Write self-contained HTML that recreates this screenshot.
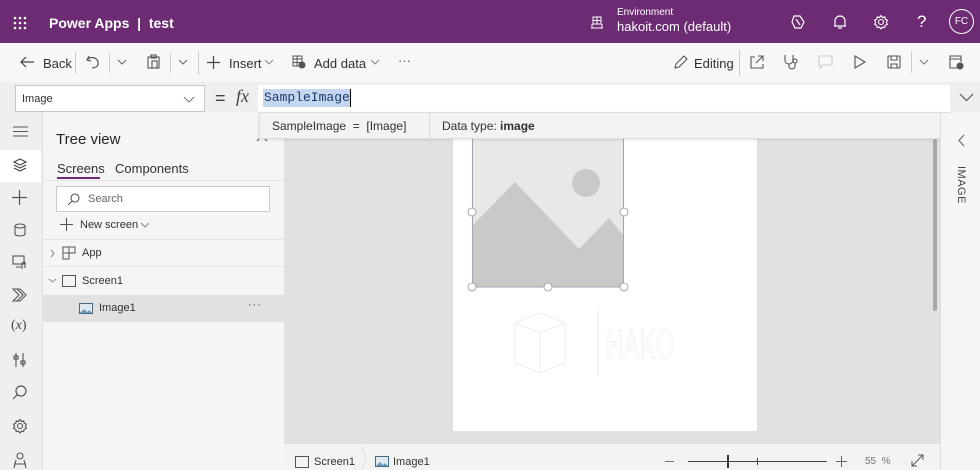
<!DOCTYPE html>
<html><head><meta charset="utf-8"><style>
*{box-sizing:border-box;margin:0;padding:0}
body{width:980px;height:470px;overflow:hidden;font-family:"Liberation Sans",sans-serif;background:#e2e2e2;position:relative;color:#323130}
.a{position:absolute}
svg{position:absolute;overflow:visible}
.t{font-size:12px;color:#323130;white-space:nowrap}
</style></head><body>
<div class="a" style="left:0;top:0;width:980px;height:43px;background:#6c2b72"></div>
<svg style="left:13px;top:16px" width="14" height="14"><g fill="#fff"><circle cx="2" cy="2" r="1.3"/><circle cx="7" cy="2" r="1.3"/><circle cx="12" cy="2" r="1.3"/><circle cx="2" cy="7" r="1.3"/><circle cx="7" cy="7" r="1.3"/><circle cx="12" cy="7" r="1.3"/><circle cx="2" cy="12" r="1.3"/><circle cx="7" cy="12" r="1.3"/><circle cx="12" cy="12" r="1.3"/></g></svg>
<div class="a" style="left:49px;top:15px;color:#fff;font-size:14px;font-weight:bold">Power Apps&nbsp; | &nbsp;test</div>
<svg style="left:590px;top:16px" width="14" height="13" fill="none" stroke="#fff" stroke-width="1"><rect x="3" y="1" width="8" height="7"/><path d="M7 1v7M3 4.5h8M1 12h12M2 8v4M12 8v4"/></svg>
<div class="a" style="left:617px;top:7px;color:#fff;font-size:10px">Environment</div>
<div class="a" style="left:617px;top:19px;color:#fff;font-size:13px">hakoit.com (default)</div>
<svg style="left:790px;top:14px" width="16" height="16" fill="none" stroke="#fff" stroke-width="1.2"><path d="M4 2h6l4 6-3 6H5L2 8z"/><path d="M6 5l4 6"/></svg>
<svg style="left:833px;top:14px" width="14" height="16" fill="none" stroke="#fff" stroke-width="1.2"><path d="M2 12V7a5 5 0 0110 0v5zM1 12h12M5 14h4"/></svg>
<svg style="left:873px;top:14px" width="16" height="16" fill="none" stroke="#fff" stroke-width="1.1"><circle cx="8" cy="8" r="2.5"/><path d="M8 1.5l1.5 2 2.3-.6.4 2.3 2.2 1-1 2.2 1 2-2.3 1-.4 2.2-2.3-.5L8 15l-1.5-1.9-2.3.5-.4-2.2-2.2-1 1-2-1-2.2 2.2-1 .4-2.3 2.3.6z"/></svg>
<div class="a" style="left:917px;top:12px;color:#fff;font-size:17px">?</div>
<div class="a" style="left:949px;top:9px;width:25px;height:25px;border:1px solid #fff;border-radius:50%;color:#fff;font-size:10px;text-align:center;line-height:23px">FC</div>

<div class="a" style="left:0;top:43px;width:980px;height:39px;background:#f7f7f7"></div>
<svg style="left:20px;top:56px" width="14" height="12" fill="none" stroke="#444" stroke-width="1.2"><path d="M14 6H1M6 1L1 6l5 5"/></svg>
<div class="a t" style="left:43px;top:56px;font-size:13px">Back</div>
<div class="a" style="left:75px;top:52px;width:1px;height:22px;background:#ccc"></div>
<svg style="left:86px;top:55px" width="14" height="13" fill="none" stroke="#555" stroke-width="1.2"><path d="M3 1L1 5l4 1M1 5c3-4 10-3 11 2s-4 6-6 6"/></svg>
<div class="a" style="left:109px;top:53px;width:1px;height:20px;background:#ccc"></div>
<svg style="left:117px;top:59px" width="10" height="6" fill="none" stroke="#666"><path d="M1 1l4 4 4-4"/></svg>
<svg style="left:147px;top:54px" width="13" height="15" fill="none" stroke="#555" stroke-width="1.1"><rect x="1" y="3" width="11" height="11"/><rect x="4" y="1" width="5" height="3"/><rect x="5" y="7" width="5" height="7"/></svg>
<div class="a" style="left:170px;top:53px;width:1px;height:20px;background:#ccc"></div>
<svg style="left:178px;top:59px" width="10" height="6" fill="none" stroke="#666"><path d="M1 1l4 4 4-4"/></svg>
<div class="a" style="left:198px;top:51px;width:1px;height:24px;background:#ccc"></div>
<svg style="left:207px;top:56px" width="13" height="13" fill="none" stroke="#444" stroke-width="1.2"><path d="M6.5 0v13M0 6.5h13"/></svg>
<div class="a t" style="left:229px;top:56px;font-size:13px">Insert</div>
<svg style="left:264px;top:59px" width="10" height="6" fill="none" stroke="#888"><path d="M1 1l4 4 4-4"/></svg>
<svg style="left:292px;top:55px" width="14" height="14" fill="none" stroke="#555" stroke-width="1"><rect x="1" y="1" width="9" height="10"/><path d="M1 4h9M1 7.5h9M5 1v10"/><circle cx="10" cy="10" r="3" fill="#555"/></svg>
<div class="a t" style="left:314px;top:56px;font-size:13px">Add data</div>
<svg style="left:370px;top:59px" width="10" height="6" fill="none" stroke="#888"><path d="M1 1l4 4 4-4"/></svg>
<div class="a t" style="left:398px;top:53px;font-size:13px;color:#555">···</div>
<svg style="left:674px;top:55px" width="14" height="14" fill="none" stroke="#555" stroke-width="1.1"><path d="M1 13l1-4 8-8 3 3-8 8z"/></svg>
<div class="a t" style="left:694px;top:56px;font-size:13px">Editing</div>
<div class="a" style="left:739px;top:50px;width:1px;height:26px;background:#ccc"></div>
<svg style="left:750px;top:55px" width="15" height="14" fill="none" stroke="#555" stroke-width="1.1"><path d="M5 2H1v11h12V9M8 1h5v5M13 1L6 8"/></svg>
<svg style="left:784px;top:54px" width="15" height="15" fill="none" stroke="#555" stroke-width="1.1"><path d="M1 1v5a4 4 0 008 0V1M5 10v2a3 3 0 006 0V9"/><circle cx="11" cy="7" r="2"/></svg>
<svg style="left:818px;top:55px" width="15" height="13" fill="none" stroke="#ccc" stroke-width="1.1"><path d="M1 1h13v9H5l-3 3v-3H1z"/></svg>
<svg style="left:854px;top:55px" width="12" height="14" fill="none" stroke="#555" stroke-width="1.1"><path d="M1 1l10 6-10 6z"/></svg>
<svg style="left:887px;top:55px" width="14" height="14" fill="none" stroke="#555" stroke-width="1.1"><rect x="1" y="1" width="12" height="12" rx="1"/><path d="M4 1v4h6V1M4 13V9h6v4"/></svg>
<div class="a" style="left:911px;top:51px;width:1px;height:22px;background:#ccc"></div>
<svg style="left:919px;top:59px" width="10" height="6" fill="none" stroke="#777"><path d="M1 1l4 4 4-4"/></svg>
<svg style="left:949px;top:55px" width="15" height="15" fill="none" stroke="#555" stroke-width="1.1"><path d="M8 13H1V1h11v6M1 4h11"/><circle cx="11" cy="11" r="3" fill="#555"/></svg>

<div class="a" style="left:0;top:82px;width:980px;height:31px;background:#efefef"></div>
<div class="a" style="left:15px;top:85px;width:190px;height:27px;background:#fff;border:1px solid #c8c8c8"></div>
<div class="a t" style="left:22px;top:93px;font-size:11px">Image</div>
<svg style="left:183px;top:96px" width="12" height="7" fill="none" stroke="#777"><path d="M1 1l5 5 5-5"/></svg>
<div class="a" style="left:215px;top:88px;font-size:18px;color:#444">=</div>
<div class="a" style="left:236px;top:86px;font-size:18px;font-style:italic;font-family:'Liberation Serif',serif;color:#444">fx</div>
<div class="a" style="left:258px;top:85px;width:692px;height:27px;background:#fff"></div>
<div class="a" style="left:263px;top:89px;font-family:'Liberation Mono',monospace;font-size:13px;background:#c5d7ee;color:#1a3a6a;line-height:18px;padding:0 1px">SampleImage</div>
<div class="a" style="left:350px;top:89px;width:1px;height:18px;background:#000"></div>
<svg style="left:959px;top:93px" width="15" height="9" fill="none" stroke="#555" stroke-width="1.2"><path d="M1 1l6.5 6.5L14 1"/></svg>

<div class="a" style="left:0;top:113px;width:42px;height:357px;background:#efefef"></div>
<div class="a" style="left:0;top:150px;width:41px;height:32px;background:#fff"></div>
<svg style="left:13px;top:126px" width="15" height="11" stroke="#555" stroke-width="1.1"><path d="M0 1h15M0 5.5h15M0 10h15"/></svg>
<svg style="left:13px;top:158px" width="14" height="14" fill="none" stroke="#444" stroke-width="1.1"><path d="M7 1l6 3-6 3-6-3zM1 7l6 3 6-3M1 10l6 3 6-3"/></svg>
<svg style="left:12px;top:190px" width="15" height="15" fill="none" stroke="#555" stroke-width="1.2"><path d="M7.5 0v15M0 7.5h15"/></svg>
<svg style="left:14px;top:223px" width="12" height="14" fill="none" stroke="#555" stroke-width="1.1"><ellipse cx="6" cy="3" rx="5" ry="2"/><path d="M1 3v8c0 2.5 10 2.5 10 0V3"/></svg>
<svg style="left:12px;top:255px" width="16" height="15" fill="none" stroke="#555" stroke-width="1.1"><rect x="1" y="1" width="11" height="8"/><path d="M4 12h5M10 8v6M13 7v6M10 8l3-1"/></svg>
<svg style="left:12px;top:288px" width="16" height="14" fill="none" stroke="#555" stroke-width="1.1"><path d="M1 1h7l6 6-6 6H1l6-6zM5 1l6 6-6 6"/></svg>
<div class="a" style="left:11px;top:318px;font-size:14px;font-family:'Liberation Serif',serif;color:#444">(<i>x</i>)</div>
<svg style="left:13px;top:352px" width="13" height="16" fill="none" stroke="#555" stroke-width="1.1"><path d="M3 1v14M10 1v14"/><rect x="1" y="4" width="4" height="3"/><rect x="8" y="9" width="4" height="3"/></svg>
<svg style="left:12px;top:385px" width="15" height="15" fill="none" stroke="#555" stroke-width="1.2"><circle cx="9" cy="6" r="5"/><path d="M5.5 9.5L1 14"/></svg>
<svg style="left:12px;top:418px" width="16" height="16" fill="none" stroke="#555" stroke-width="1.1"><circle cx="8" cy="8" r="2.5"/><path d="M8 1.5l1.5 2 2.3-.6.4 2.3 2.2 1-1 2.2 1 2-2.3 1-.4 2.2-2.3-.5L8 15l-1.5-1.9-2.3.5-.4-2.2-2.2-1 1-2-1-2.2 2.2-1 .4-2.3 2.3.6z"/></svg>
<svg style="left:13px;top:452px" width="14" height="16" fill="none" stroke="#555" stroke-width="1.1"><circle cx="7" cy="4" r="3"/><path d="M1 12h12M3 8l-2 8M11 8l2 8"/></svg>

<div class="a" style="left:42px;top:113px;width:242px;height:357px;background:#f5f5f5;border-left:1px solid #e0e0e0"></div>
<div class="a" style="left:56px;top:131px;font-size:15px;color:#252423">Tree view</div>
<svg style="left:256px;top:135px" width="12" height="7" fill="none" stroke="#555"><path d="M1 6l5-5 5 5"/></svg>
<div class="a t" style="left:57px;top:161px;font-size:13px">Screens</div>
<div class="a" style="left:57px;top:177px;width:43px;height:2px;background:#6c2b72"></div>
<div class="a t" style="left:115px;top:161px;font-size:13px">Components</div>
<div class="a" style="left:43px;top:180px;width:241px;height:1px;background:#e4e4e4"></div>
<div class="a" style="left:56px;top:186px;width:214px;height:26px;background:#fff;border:1px solid #ccc"></div>
<svg style="left:67px;top:193px" width="13" height="13" fill="none" stroke="#555" stroke-width="1.1"><circle cx="8" cy="5" r="4"/><path d="M5 8l-4 4"/></svg>
<div class="a t" style="left:88px;top:193px;font-size:11px;color:#666">Search</div>
<svg style="left:60px;top:218px" width="13" height="13" fill="none" stroke="#555" stroke-width="1.1"><path d="M6.5 0v13M0 6.5h13"/></svg>
<div class="a t" style="left:80px;top:219px;font-size:11px">New screen</div>
<svg style="left:140px;top:222px" width="10" height="6" fill="none" stroke="#888"><path d="M1 1l4 4 4-4"/></svg>
<div class="a" style="left:43px;top:239px;width:241px;height:1px;background:#e4e4e4"></div>
<svg style="left:50px;top:249px" width="5" height="9" fill="none" stroke="#888"><path d="M1 1l3 3.5-3 3.5"/></svg>
<svg style="left:62px;top:246px" width="14" height="14" fill="none" stroke="#555" stroke-width="1"><path d="M1 1h6v6H1zM7 1h6v6H7M1 7v6h6V7"/></svg>
<div class="a t" style="left:82px;top:247px;font-size:11px">App</div>
<div class="a" style="left:43px;top:266px;width:241px;height:1px;background:#e4e4e4"></div>
<svg style="left:48px;top:278px" width="9" height="5" fill="none" stroke="#888"><path d="M1 1l3.5 3L8 1"/></svg>
<div class="a" style="left:62px;top:275px;width:14px;height:12px;border:1px solid #555"></div>
<div class="a t" style="left:82px;top:275px;font-size:11px">Screen1</div>
<div class="a" style="left:43px;top:295px;width:241px;height:27px;background:#e1e1e1"></div>
<svg style="left:79px;top:303px" width="14" height="11"><rect x=".5" y=".5" width="13" height="10" fill="#dfe8ee" stroke="#4a6a80"/><path d="M1 10l4-4 3 3 2-2 3 3z" fill="#6a9ab8"/></svg>
<div class="a t" style="left:99px;top:302px;font-size:11px">Image1</div>
<div class="a t" style="left:248px;top:299px;font-size:11px;color:#444;letter-spacing:1px">···</div>

<div class="a" style="left:284px;top:113px;width:656px;height:331px;background:#e1e1e1"></div>
<div class="a" style="left:453px;top:113px;width:304px;height:318px;background:#fff"></div>
<svg style="left:453px;top:113px" width="304" height="318">
<g fill="none" stroke="#f0f0f0" stroke-width="1.2"><path d="M62 210l25-10 25 10v40l-25 10-25-10z M62 210l25 10 25-10 M87 220v40"/><path d="M145 193v70"/><text x="153" y="245" font-size="40" fill="none" stroke="#f0f0f0" font-family="Liberation Sans" transform="scale(0.6 1)" style="transform-origin:153px 245px">HAKO</text></g>
</svg>
<svg style="left:472px;top:137px" width="152" height="150">
<rect x="0" y="0" width="152" height="150" fill="#e8e8e9"/>
<polygon points="0,89 43,45 107,112 137,81 152,99 152,150 0,150" fill="#c9c9ca"/>
<circle cx="114" cy="46" r="14" fill="#c9c9ca"/>
<rect x=".5" y=".5" width="151" height="149.5" fill="none" stroke="#a9a0b0"/>
<g fill="#fff" stroke="#999" stroke-width="0.8"><circle cx="0" cy="75" r="4"/><circle cx="152" cy="75" r="4"/><circle cx="0" cy="150" r="4"/><circle cx="76" cy="150" r="4"/><circle cx="152" cy="150" r="4"/></g>
</svg>
<div class="a" style="left:933px;top:139px;width:4px;height:172px;background:#a8a8a8;border-radius:2px"></div>

<div class="a" style="left:259px;top:112px;width:691px;height:27px;background:#f3f3f3;border:1px solid #ddd;box-shadow:0 1px 3px rgba(0,0,0,.1)"></div>
<div class="a t" style="left:272px;top:119px;font-size:12px">SampleImage&nbsp; = &nbsp;[Image]</div>
<div class="a" style="left:429px;top:112px;width:1px;height:27px;background:#ddd"></div>
<div class="a t" style="left:442px;top:119px;font-size:12px">Data type: <b>image</b></div>

<div class="a" style="left:940px;top:113px;width:40px;height:357px;background:#f5f5f5;border-left:1px solid #e0e0e0"></div>
<svg style="left:958px;top:134px" width="7" height="13" fill="none" stroke="#666" stroke-width="1.1"><path d="M6 1L1 6.5 6 12"/></svg>
<div class="a" style="left:955px;top:166px;font-size:11px;color:#444;writing-mode:vertical-rl;letter-spacing:.5px">IMAGE</div>

<div class="a" style="left:284px;top:444px;width:656px;height:26px;background:#f3f3f3"></div>
<div class="a" style="left:295px;top:456px;width:14px;height:12px;border:1px solid #555"></div>
<div class="a t" style="left:314px;top:456px;font-size:11px">Screen1</div>
<svg style="left:361px;top:447px" width="6" height="23" fill="none" stroke="#ddd"><path d="M1 0l4 11.5L1 23"/></svg>
<svg style="left:375px;top:456px" width="14" height="11"><rect x=".5" y=".5" width="13" height="10" fill="#dfe8ee" stroke="#4a6a80"/><path d="M1 10l4-4 3 3 2-2 3 3z" fill="#6a9ab8"/></svg>
<div class="a t" style="left:393px;top:456px;font-size:11px">Image1</div>
<div class="a" style="left:665px;top:461px;width:9px;height:1px;background:#777"></div>
<div class="a" style="left:688px;top:461px;width:139px;height:1px;background:#444"></div>
<div class="a" style="left:727px;top:455px;width:2px;height:13px;background:#333"></div>
<div class="a" style="left:757px;top:458px;width:1px;height:7px;background:#444"></div>
<svg style="left:836px;top:456px" width="11" height="11" stroke="#666"><path d="M5.5 0v11M0 5.5h11"/></svg>
<div class="a t" style="left:865px;top:456px;font-size:10px;color:#777">55 &nbsp;%</div>
<svg style="left:911px;top:454px" width="13" height="13" fill="none" stroke="#555"><path d="M1 12L12 1M7 1h5v5M1 7v5h5"/></svg>
</body></html>
